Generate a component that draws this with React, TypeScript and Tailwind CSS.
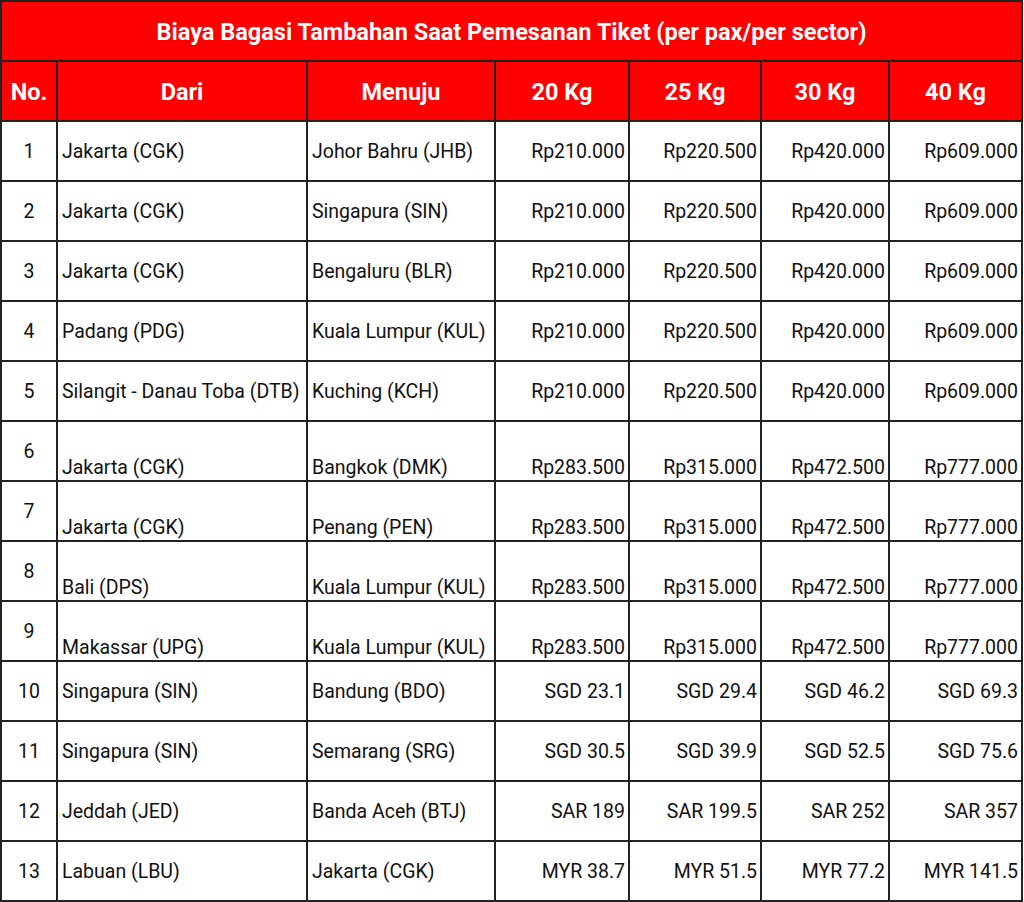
const rows: [string, string, string, string, string, string, string, boolean][] = [
  ["1", "Jakarta (CGK)", "Johor Bahru (JHB)", "Rp210.000", "Rp220.500", "Rp420.000", "Rp609.000", false],
  ["2", "Jakarta (CGK)", "Singapura (SIN)", "Rp210.000", "Rp220.500", "Rp420.000", "Rp609.000", false],
  ["3", "Jakarta (CGK)", "Bengaluru (BLR)", "Rp210.000", "Rp220.500", "Rp420.000", "Rp609.000", false],
  ["4", "Padang (PDG)", "Kuala Lumpur (KUL)", "Rp210.000", "Rp220.500", "Rp420.000", "Rp609.000", false],
  ["5", "Silangit - Danau Toba (DTB)", "Kuching (KCH)", "Rp210.000", "Rp220.500", "Rp420.000", "Rp609.000", false],
  ["6", "Jakarta (CGK)", "Bangkok (DMK)", "Rp283.500", "Rp315.000", "Rp472.500", "Rp777.000", true],
  ["7", "Jakarta (CGK)", "Penang (PEN)", "Rp283.500", "Rp315.000", "Rp472.500", "Rp777.000", true],
  ["8", "Bali (DPS)", "Kuala Lumpur (KUL)", "Rp283.500", "Rp315.000", "Rp472.500", "Rp777.000", true],
  ["9", "Makassar (UPG)", "Kuala Lumpur (KUL)", "Rp283.500", "Rp315.000", "Rp472.500", "Rp777.000", true],
  ["10", "Singapura (SIN)", "Bandung (BDO)", "SGD 23.1", "SGD 29.4", "SGD 46.2", "SGD 69.3", false],
  ["11", "Singapura (SIN)", "Semarang (SRG)", "SGD 30.5", "SGD 39.9", "SGD 52.5", "SGD 75.6", false],
  ["12", "Jeddah (JED)", "Banda Aceh (BTJ)", "SAR 189", "SAR 199.5", "SAR 252", "SAR 357", false],
  ["13", "Labuan (LBU)", "Jakarta (CGK)", "MYR 38.7", "MYR 51.5", "MYR 77.2", "MYR 141.5", false],
];

const headers = ["No.", "Dari", "Menuju", "20 Kg", "25 Kg", "30 Kg", "40 Kg"];

export default function App() {
  return (
    <div className="w-[1024px] h-[902px] bg-white font-['Roboto',sans-serif]">
      <div className="w-[1023px] border-l-2 border-t-2 border-[#222]">
        <div className="h-[60px] pt-[3px] bg-[#ff0000] border-r-2 border-b-2 border-[#222] flex items-center justify-center text-white font-bold text-[23.5px]">
          Biaya Bagasi Tambahan Saat Pemesanan Tiket (per pax/per sector)
        </div>
        <div className="grid grid-cols-[56px_250px_188px_134px_132px_128px_133px]">
          {headers.map((h) => (
            <div
              key={h}
              className="h-[60px] pt-[3px] bg-[#ff0000] border-r-2 border-b-2 border-[#222] flex items-center justify-center text-white font-bold text-[23.5px]"
            >
              {h}
            </div>
          ))}
          {rows.map((r) => {
            const [no, from, to, a, b, c, d, low] = r;
            const align = low ? "items-end" : "items-center pt-[2px]";
            const cell = "h-[60px] border-r-2 border-b-2 border-[#222] flex text-[19.5px] leading-6 text-[#111]";
            return (
              <div key={no} className="contents">
                <div className={`${cell} items-center justify-center pt-[2px]`}>{no}</div>
                <div className={`${cell} ${align} pl-[4px] whitespace-nowrap`}>{from}</div>
                <div className={`${cell} ${align} pl-[4px] whitespace-nowrap`}>{to}</div>
                {[a, b, c, d].map((v, i) => (
                  <div key={i} className={`${cell} ${align} justify-end pr-[3px]`}>
                    {v}
                  </div>
                ))}
              </div>
            );
          })}
        </div>
      </div>
    </div>
  );
}
